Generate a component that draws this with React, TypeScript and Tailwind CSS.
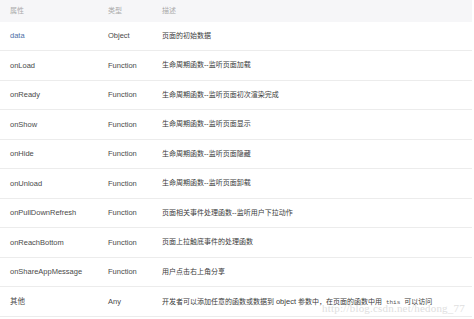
import React from "react";

const rows: { name: string; type: string; desc: React.ReactNode; blue?: boolean }[] = [
  { name: "data", type: "Object", desc: "页面的初始数据", blue: true },
  { name: "onLoad", type: "Function", desc: "生命周期函数--监听页面加载" },
  { name: "onReady", type: "Function", desc: "生命周期函数--监听页面初次渲染完成" },
  { name: "onShow", type: "Function", desc: "生命周期函数--监听页面显示" },
  { name: "onHide", type: "Function", desc: "生命周期函数--监听页面隐藏" },
  { name: "onUnload", type: "Function", desc: "生命周期函数--监听页面卸载" },
  { name: "onPullDownRefresh", type: "Function", desc: "页面相关事件处理函数--监听用户下拉动作" },
  { name: "onReachBottom", type: "Function", desc: "页面上拉触底事件的处理函数" },
  { name: "onShareAppMessage", type: "Function", desc: "用户点击右上角分享" },
  {
    name: "其他",
    type: "Any",
    desc: (
      <>
        开发者可以添加任意的函数或数据到 <span className="text-[7.5px]">object</span> 参数中，在页面的函数中用{" "}
        <code className="mx-[2px] text-[6px] font-['Liberation_Mono',monospace] text-[#555]">this</code> 可以访问
      </>
    ),
  },
];

export default function App() {
  return (
    <div className="w-[474px] h-[319px] bg-white overflow-hidden relative font-['Liberation_Sans','Noto_Sans_CJK_SC',sans-serif] text-[7.5px] text-[#4a4a4a]">
      <div className="w-[472px]">
        <div className="flex items-center h-[22px] bg-[#f6f6f8] text-[#aaa] text-[7px]">
          <div className="w-[108px] pl-[10px]">属性</div>
          <div className="w-[54px]">类型</div>
          <div className="flex-1">描述</div>
        </div>
        {rows.map((r, i) => (
          <div
            key={i}
            className={`flex items-center ${i === 0 ? "h-[29px]" : "h-[29.5px]"} border-b border-[#ececec]`}
          >
            <div className={`w-[108px] pl-[10px] ${r.blue ? "text-[#4d6fa6]" : ""}`}>{r.name}</div>
            <div className="w-[54px]">{r.type}</div>
            <div className="flex-1 text-[7px] text-[#3a3a3a] whitespace-nowrap">{r.desc}</div>
          </div>
        ))}
      </div>
      <div className="absolute left-[322px] top-[303px] text-[11px] leading-none text-[#e0e0e0] font-['Liberation_Serif',serif] tracking-[0.2px]">
        http://blog.csdn.net/hedong_77
      </div>
    </div>
  );
}
